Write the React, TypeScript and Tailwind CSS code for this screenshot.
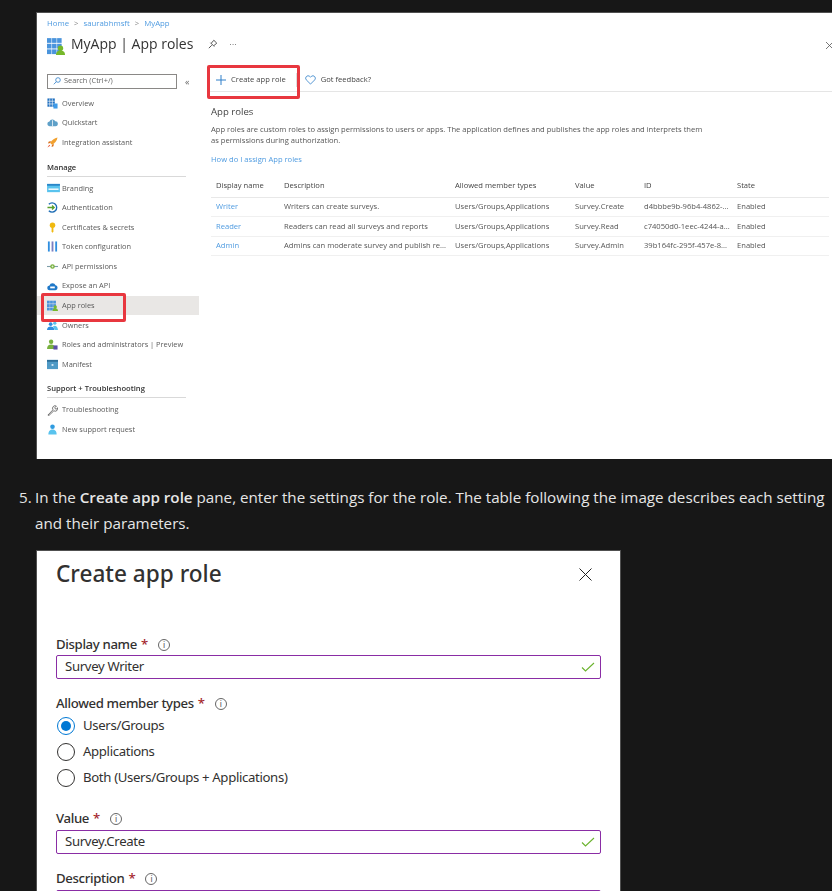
import React from "react";

const navTop = [
  { label: "Overview", icon: "overview" },
  { label: "Quickstart", icon: "cloud" },
  { label: "Integration assistant", icon: "rocket" },
];
const navManage = [
  { label: "Branding", icon: "branding" },
  { label: "Authentication", icon: "auth" },
  { label: "Certificates & secrets", icon: "key" },
  { label: "Token configuration", icon: "token" },
  { label: "API permissions", icon: "api" },
  { label: "Expose an API", icon: "expose" },
  { label: "App roles", icon: "grid", active: true },
  { label: "Owners", icon: "owners" },
  { label: "Roles and administrators | Preview", icon: "admin" },
  { label: "Manifest", icon: "manifest" },
];
const navSupport = [
  { label: "Troubleshooting", icon: "wrench" },
  { label: "New support request", icon: "support" },
];
const roles = [
  ["Writer", "Writers can create surveys.", "Survey.Create", "d4bbbe9b-96b4-4862-..."],
  ["Reader", "Readers can read all surveys and reports", "Survey.Read", "c74050d0-1eec-4244-a..."],
  ["Admin", "Admins can moderate survey and publish re...", "Survey.Admin", "39b164fc-295f-457e-8..."],
];

function GridIcon({ size = 12 }: { size?: number }) {
  return (
    <svg width={size} height={size} viewBox="0 0 16 16">
      {[1, 6, 11].map((y) =>
        [0, 4.5, 9].map((x) => <rect key={`${x}-${y}`} x={x} y={y} width="4" height="4.2" fill="#4a94dc" />)
      )}
      <circle cx="12" cy="10" r="2.4" fill="#76b82a" />
      <path d="M8 16c0-3 2-4 4-4s4 1 4 4z" fill="#76b82a" />
    </svg>
  );
}

function NavIcon({ name }: { name: string }) {
  const common = { width: 11, height: 11, viewBox: "0 0 12 12" };
  switch (name) {
    case "overview":
      return (
        <svg {...common}>
          <rect x="0.5" y="0.5" width="8" height="9" fill="#1f6fbf" />
          <path d="M3 .5v9M5.8.5v9M.5 3.5h8M.5 6.5h8" stroke="#fff" strokeWidth="0.7" />
          <rect x="7" y="6" width="4.5" height="5.5" fill="#3f9be8" />
        </svg>
      );
    case "cloud":
      return (
        <svg {...common}>
          <path d="M3 10a2.5 2.5 0 0 1-.3-5A3.4 3.4 0 0 1 9 4.6 2.7 2.7 0 0 1 9.300 10z" fill="#5ea0c8" />
          <path d="M6 3.500v6.500" stroke="#fff" strokeWidth="0.8" />
        </svg>
      );
    case "rocket":
      return (
        <svg {...common}>
          <path d="M11.500.5C8 1 5 3.500 3.500 6.500l2 2C8.500 7 11 4 11.500.5z" fill="#f2a12e" />
          <path d="M3.500 6.500 1 7l1-2 2.500-.5zM5.500 8.500 5 11l2-1 .5-2.500z" fill="#d9701a" />
          <path d="M2.500 8.500 .5 11.500l3-2z" fill="#e8502a" />
        </svg>
      );
    case "branding":
      return (
        <svg width={13} height={11} viewBox="0 0 14 12">
          <rect x="0" y="1" width="14" height="9" fill="#59c3ee" />
          <rect x="0" y="1" width="14" height="2" fill="#2a86c8" />
          <rect x="1.500" y="6" width="11" height="1.500" fill="#fff" />
        </svg>
      );
    case "auth":
      return (
        <svg {...common}>
          <path d="M2 2.500a5 5 0 1 1 0 7" fill="none" stroke="#1e6db5" strokeWidth="1.500" />
          <path d="M.5 6h7M5.500 3.800 7.800 6 5.500 8.200" fill="none" stroke="#5aa02c" strokeWidth="1.400" />
        </svg>
      );
    case "key":
      return (
        <svg {...common}>
          <circle cx="6" cy="3.500" r="3" fill="#f0b90f" />
          <path d="M5 5.500h2v5L6 11.800 5 10.500z" fill="#f0b90f" />
        </svg>
      );
    case "token":
      return (
        <svg {...common}>
          <rect x="1" y="0.500" width="2" height="11" fill="#2f8ee0" />
          <rect x="5" y="0.500" width="2" height="11" fill="#7a7fc2" />
          <rect x="9" y="0.500" width="2" height="11" fill="#2f8ee0" />
        </svg>
      );
    case "api":
      return (
        <svg {...common}>
          <path d="M0 6h12" stroke="#7d9da8" strokeWidth="1.200" />
          <circle cx="6" cy="6" r="2.500" fill="#78b13f" />
          <circle cx="6" cy="6" r="1" fill="#e7f2d8" />
        </svg>
      );
    case "expose":
      return (
        <svg {...common}>
          <path d="M3 10.200a2.600 2.600 0 0 1-.3-5.200A3.500 3.500 0 0 1 9.300 4.700 2.800 2.800 0 0 1 9.200 10.200z" fill="#1f78c8" />
          <rect x="3.500" y="6" width="5" height="2" fill="#fff" />
        </svg>
      );
    case "grid":
      return <GridIcon size={11} />;
    case "owners":
      return (
        <svg {...common}>
          <circle cx="4" cy="4.500" r="2" fill="#2f8ee0" />
          <path d="M0 11c0-3 2-4 4-4s4 1 4 4z" fill="#2f8ee0" />
          <circle cx="8.500" cy="3.500" r="1.800" fill="#59c3ee" />
          <path d="M6.500 7c2-1.500 5-.8 5.500 4H8.500z" fill="#59c3ee" />
        </svg>
      );
    case "admin":
      return (
        <svg {...common}>
          <circle cx="4.500" cy="3" r="2.400" fill="#78b13f" />
          <path d="M0 11c0-3.500 2-5 4.500-5S9 7.500 9 11z" fill="#78b13f" />
          <rect x="7" y="7" width="4.500" height="4.500" fill="#5c4ea8" />
        </svg>
      );
    case "manifest":
      return (
        <svg {...common}>
          <rect x="0" y="1" width="12" height="10" fill="#4f9ac6" />
          <rect x="0" y="1" width="12" height="2" fill="#2c6f99" />
          <rect x="5" y="5.500" width="2" height="2" fill="#d8ecf7" />
        </svg>
      );
    case "wrench":
      return (
        <svg {...common}>
          <path d="M1 11 6.500 5.200A2.800 2.800 0 0 1 10.200 1.200L8.500 3l.6 1.200 1.300.4 1.200-1.700A2.800 2.800 0 0 1 7.500 6.300L2 11.500z" fill="none" stroke="#444" strokeWidth="0.800" />
        </svg>
      );
    default:
      return (
        <svg {...common}>
          <circle cx="6" cy="3" r="2.500" fill="#2f9be0" />
          <path d="M1.500 11.500c0-4 2-5.500 4.500-5.500s4.500 1.500 4.500 5.500z" fill="#59c3ee" />
        </svg>
      );
  }
}

function NavRow({ item }: { item: { label: string; icon: string; active?: boolean } }) {
  return (
    <div className={`flex h-[19.6px] items-center pl-[10px] ${item.active ? "bg-[#e9e7e5]" : ""}`}>
      <div className="flex w-[15px] shrink-0 items-center">
        <NavIcon name={item.icon} />
      </div>
      <span className="whitespace-nowrap text-[7.4px] text-[#5a5a5a]">{item.label}</span>
    </div>
  );
}

function NavHeading({ children }: { children: React.ReactNode }) {
  return (
    <div className="mr-[13px] ml-[10px] flex h-[20px] items-end border-b border-[#d9d9d9] pb-[3px] text-[7.6px] font-semibold text-[#333333]">
      {children}
    </div>
  );
}

function InfoIcon() {
  return (
    <span className="ml-[10px] flex h-[12px] w-[12px] items-center justify-center rounded-full border border-[#666666] text-[8px] leading-none text-[#666666]">
      i
    </span>
  );
}

function FieldLabel({ text }: { text: string }) {
  return (
    <div className="flex h-[20px] items-center pb-[2px] text-[13.2px] font-medium tracking-[-0.35px] text-[#323130]">
      <span>{text}</span>
      <span className="ml-[4px] text-[#a4262c]">*</span>
      <InfoIcon />
    </div>
  );
}

function Field({ value }: { value: string }) {
  return (
    <div className="flex h-[24px] w-[545px] items-center justify-between rounded-[2px] border-[1.5px] border-[#8a2da5] pr-[5px] pl-[8px] text-[13.2px] tracking-[-0.35px] text-[#323130]">
      <span>{value}</span>
      <svg width="14" height="10" viewBox="0 0 14 10" fill="none">
        <path d="M1 5.500 4.500 9 13 1" stroke="#6bb32e" strokeWidth="1.100" />
      </svg>
    </div>
  );
}

function Radio({ label, checked }: { label: string; checked?: boolean }) {
  return (
    <div className="flex h-[26px] items-center text-[13.2px] tracking-[-0.35px] text-[#323130]">
      <span
        className={`mr-[8px] ml-[1px] flex h-[18px] w-[18px] items-center justify-center rounded-full border ${
          checked ? "border-[#0078d4]" : "border-[#323130]"
        }`}
      >
        {checked && <span className="h-[10px] w-[10px] rounded-full bg-[#0078d4]" />}
      </span>
      {label}
    </div>
  );
}

export default function App() {
  return (
    <div className="h-[891px] w-[832px] overflow-hidden bg-[#171717] font-['Open_Sans','Noto_Sans',sans-serif]">
      {/* first screenshot */}
      <div className="relative mt-[12px] ml-[36px] inline-block h-[447px] w-[796px] align-top blur-[0.3px]">
        <div className="h-full w-full border-t border-l border-[#505050] bg-white">
          <div className="flex h-[52px] flex-col px-[10px] pt-[5px]">
            <div className="flex items-center text-[7.8px] leading-[11px] text-[#4f9be0]">
              <span>Home</span>
              <span className="mx-[5px] text-[#888888]">&gt;</span>
              <span>saurabhmsft</span>
              <span className="mx-[5px] text-[#888888]">&gt;</span>
              <span>MyApp</span>
            </div>
            <div className="mt-[3px] flex items-center">
              <div className="mt-[5px] w-[24px]">
                <GridIcon size={18} />
              </div>
              <span className="text-[14px] leading-[20px] text-[#333333]">MyApp | App roles</span>
              <svg className="ml-[15px]" width="10" height="10" viewBox="0 0 12 12" fill="none" stroke="#333333" strokeWidth="1">
                <path d="M1 11 4.500 7.500M3 4.500 7.500 9M4 5l3-3.500L10.500 5 7 8" />
              </svg>
              <span className="mb-[4px] ml-[11px] text-[8px] tracking-[0.5px] text-[#555555]">...</span>
              <svg className="absolute top-[29px] right-[-1px]" width="8" height="8" viewBox="0 0 8 8" stroke="#555555" strokeWidth="0.800">
                <path d="M1 1l7 7M8 1 1 8" />
              </svg>
            </div>
          </div>
          <div className="flex">
            <aside className="w-[162px] shrink-0">
              <div className="flex h-[26px] items-center pt-[6px] pl-[10px]">
                <div className="flex h-[15px] w-[130px] items-center border border-[#8a8886] pl-[5px] text-[7.4px] text-[#666666]">
                  <svg className="mr-[3px]" width="8" height="8" viewBox="0 0 8 8" fill="none" stroke="#2f7fc9" strokeWidth="0.800">
                    <circle cx="5" cy="3" r="2.300" />
                    <path d="M3.300 4.700 .8 7.300" />
                  </svg>
                  Search (Ctrl+/)
                </div>
                <span className="ml-[8px] text-[9px] leading-none text-[#666666]">«</span>
              </div>
              <div className="pt-[2.5px]">
                {navTop.map((n) => (
                  <NavRow key={n.label} item={n} />
                ))}
              </div>
              <div className="mt-[5px]">
                <NavHeading>Manage</NavHeading>
              </div>
              <div className="pt-[1px]">
                {navManage.map((n) => (
                  <NavRow key={n.label} item={n} />
                ))}
              </div>
              <div className="mt-[4px]">
                <NavHeading>Support + Troubleshooting</NavHeading>
              </div>
              <div className="pt-[2px]">
                {navSupport.map((n) => (
                  <NavRow key={n.label} item={n} />
                ))}
              </div>
            </aside>
            <main className="min-w-0 flex-1 pl-[12px]">
              <div className="-ml-[4px] flex h-[27px] items-center border-b border-[#e5e5e5] pt-[4px] text-[7.6px] text-[#444444]">
                <svg className="mr-[5px] ml-[9px]" width="10" height="10" viewBox="0 0 10 10" stroke="#2f7fc9" strokeWidth="1">
                  <path d="M5 0v10M0 5h10" />
                </svg>
                <span>Create app role</span>
                <span className="mr-[8px] ml-[10px] h-[14px] w-px bg-[#dddddd]" />
                <svg className="mr-[5px]" width="11" height="10" viewBox="0 0 12 11" fill="none" stroke="#2f7fc9" strokeWidth="0.900">
                  <path d="M6 10 1.300 5.300a2.700 2.700 0 0 1 3.800-3.800L6 2.400l.9-.9a2.700 2.700 0 0 1 3.800 3.800z" />
                </svg>
                <span>Got feedback?</span>
              </div>
              <h2 className="mt-[13px] text-[9.6px] leading-[13px] text-[#444444]">App roles</h2>
              <p className="mt-[6px] w-[500px] text-[7.6px] leading-[11px] text-[#555555]">
                App roles are custom roles to assign permissions to users or apps. The application defines and publishes the app roles and interprets them as permissions during authorization.
              </p>
              <a className="mt-[8px] block text-[7.6px] leading-[11px] text-[#4f9be0]">How do I assign App roles</a>
              <table className="mt-[10px] w-[618px] table-fixed text-left text-[7.6px] text-[#555555]">
                <colgroup>
                  <col className="w-[73px]" />
                  <col className="w-[171px]" />
                  <col className="w-[120px]" />
                  <col className="w-[69px]" />
                  <col className="w-[93px]" />
                  <col />
                </colgroup>
                <thead>
                  <tr className="h-[22px] border-b border-[#e8e8e8] text-[#444444]">
                    <th className="pl-[5px] font-medium">Display name</th>
                    <th className="font-medium">Description</th>
                    <th className="font-medium">Allowed member types</th>
                    <th className="font-medium">Value</th>
                    <th className="font-medium">ID</th>
                    <th className="font-medium">State</th>
                  </tr>
                </thead>
                <tbody>
                  {roles.map((r) => (
                    <tr key={r[0]} className="h-[19.6px] border-b border-[#f0f0f0]">
                      <td className="pl-[5px] text-[#4f9be0]">{r[0]}</td>
                      <td className="whitespace-nowrap">{r[1]}</td>
                      <td>Users/Groups,Applications</td>
                      <td>{r[2]}</td>
                      <td className="whitespace-nowrap">{r[3]}</td>
                      <td>Enabled</td>
                    </tr>
                  ))}
                </tbody>
              </table>
            </main>
          </div>
        </div>
        {/* red highlight boxes */}
        <div className="absolute top-[53px] left-[171px] h-[34px] w-[93px] rounded-[2px] border-[3px] border-[#e8373f]" />
        <div className="absolute top-[281px] left-[5px] h-[29px] w-[85px] rounded-[2px] border-[3px] border-[#e8373f]" />
      </div>

      {/* step 5 */}
      <ol className="mt-[25px] list-none pl-[19px] text-[15.2px] leading-[26px] text-[#e6e6e6]">
        <li className="flex">
          <span className="w-[16px] shrink-0">5.</span>
          <span className="w-[795px]">
            In the <b className="font-semibold">Create app role</b> pane, enter the settings for the role. The table following the image describes each setting and their parameters.
          </span>
        </li>
      </ol>

      {/* second screenshot */}
      <div className="mt-[14px] ml-[36px] h-[400px] w-[585px] border-t border-r border-l border-[#505050] bg-white pl-[19px] font-['Noto_Sans','Open_Sans',sans-serif]">
        <div className="flex h-[46px] w-[536px] items-center justify-between">
          <span className="text-[22.6px] font-medium text-[#323130]">Create app role</span>
          <svg width="13" height="13" viewBox="0 0 13 13" stroke="#222222" strokeWidth="1">
            <path d="M.5.5l12 12M12.500.5l-12 12" />
          </svg>
        </div>
        <div className="mt-[39px]">
          <FieldLabel text="Display name" />
        </div>
        <div className="-mt-[1px]">
          <Field value="Survey Writer" />
        </div>
        <div className="mt-[16px]">
          <FieldLabel text="Allowed member types" />
        </div>
        <div className="-mt-[2px]">
          <Radio label="Users/Groups" checked />
          <Radio label="Applications" />
          <Radio label="Both (Users/Groups + Applications)" />
        </div>
        <div className="mt-[19px]">
          <FieldLabel text="Value" />
        </div>
        <Field value="Survey.Create" />
        <div className="mt-[16px]">
          <FieldLabel text="Description" />
        </div>
        <div className="h-[24px] w-[545px] rounded-[2px] border-[1.500px] border-[#8a2da5]" />
      </div>
    </div>
  );
}
